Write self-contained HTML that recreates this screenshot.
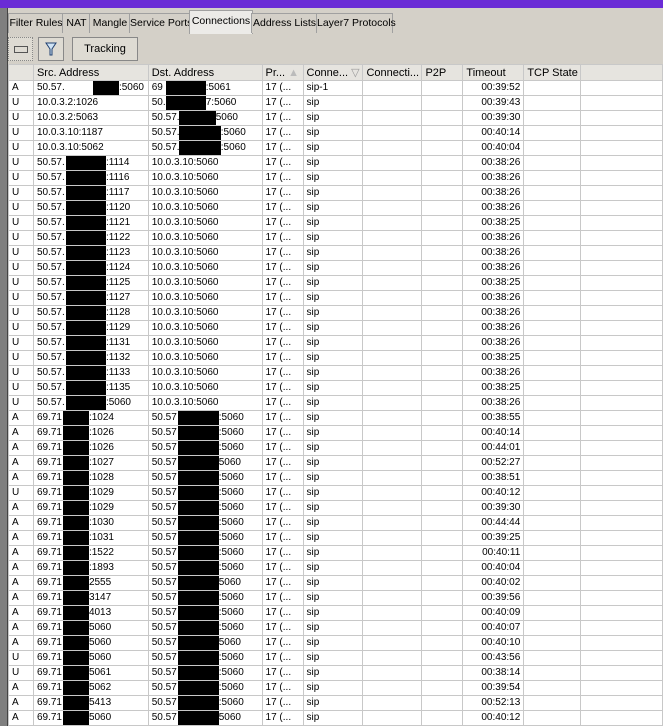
<!DOCTYPE html>
<html><head><meta charset="utf-8"><style>
body{margin:0;width:663px;height:726px;overflow:hidden;background:#d4d0c8;font-family:"Liberation Sans",sans-serif;font-size:10px;position:relative}
.title{position:absolute;left:0;top:0;width:663px;height:8px;background:#6a2bd6}
.lb{position:absolute;left:0;top:8px;width:7px;height:718px;background:#7f7f7f;border-right:1px solid #444}
.tab{position:absolute;top:13px;height:19px;line-height:19px;border:1px solid #a0a0a0;border-bottom:none;text-align:center;font-size:10.5px;background:#d4d0c8;white-space:nowrap;overflow:visible}
.tab.act{top:10px;height:23px;line-height:21px;background:#ecebe8}
.btn{position:absolute;top:37px;height:22px;border:1px solid #888;background:#dedbd3;text-align:center;line-height:22px;font-size:11px}
table{position:absolute;left:8px;top:64px;border-collapse:collapse;table-layout:fixed;background:#fff}
td{height:14px;border:1px solid #c8c8c8;padding:0 0 0 3px;white-space:nowrap;overflow:hidden;position:relative;line-height:14px}
tr.h td{height:15px;background:#e6e4df;font-size:11px}
td.r{text-align:right;padding-right:3px}
.k{position:absolute;top:0;height:15px;background:#000}
b{position:absolute;top:0;font-weight:normal}
</style></head><body>
<div class="title"></div><div class="lb"></div>
<div class="tab" style="left:8px;width:54px">Filter Rules</div>
<div class="tab" style="left:62px;width:27px">NAT</div>
<div class="tab" style="left:89px;width:40px">Mangle</div>
<div class="tab" style="left:129px;width:60px">Service Ports</div>
<div class="tab act" style="left:189px;width:62px">Connections</div>
<div class="tab" style="left:251px;width:65px">Address Lists</div>
<div class="tab" style="left:316px;width:75px">Layer7 Protocols</div>
<div class="btn" style="left:8px;width:23px;border-style:dotted"><span style="display:inline-block;width:12px;height:5px;border:1px solid #555;vertical-align:middle"></span></div>
<div class="btn" style="left:38px;width:24px"><svg width="12" height="16" viewBox="0 0 12 16" style="vertical-align:middle"><path d="M1 2h10L7 8v6H5V8z" fill="#cfe3f5" stroke="#204070"/></svg></div>
<div class="btn" style="left:72px;width:64px">Tracking</div>
<table>
<colgroup><col style="width:25px"><col style="width:115px"><col style="width:114px"><col style="width:41px"><col style="width:60px"><col style="width:59px"><col style="width:41px"><col style="width:61px"><col style="width:57px"><col style="width:82px"></colgroup>
<tr class="h"><td></td><td>Src. Address</td><td>Dst. Address</td><td>Pr... <span style="color:#bbb">▲</span></td><td>Conne... <span style="color:#999">▽</span></td><td>Connecti...</td><td>P2P</td><td>Timeout</td><td>TCP State</td><td></td></tr>
<tr><td>A</td><td>50.57.<i class="k" style="left:59px;width:26px"></i><b style="left:85px">:5060</b></td><td>69<i class="k" style="left:17px;width:40px"></i><b style="left:57px">:5061</b></td><td>17 (...</td><td>sip-1</td><td></td><td></td><td class="r">00:39:52</td><td></td><td></td></tr>
<tr><td>U</td><td>10.0.3.2:1026</td><td>50.<i class="k" style="left:17px;width:40px"></i><b style="left:57px">7:5060</b></td><td>17 (...</td><td>sip</td><td></td><td></td><td class="r">00:39:43</td><td></td><td></td></tr>
<tr><td>U</td><td>10.0.3.2:5063</td><td>50.57.<i class="k" style="left:30px;width:37px"></i><b style="left:67px">5060</b></td><td>17 (...</td><td>sip</td><td></td><td></td><td class="r">00:39:30</td><td></td><td></td></tr>
<tr><td>U</td><td>10.0.3.10:1187</td><td>50.57.<i class="k" style="left:30px;width:42px"></i><b style="left:72px">:5060</b></td><td>17 (...</td><td>sip</td><td></td><td></td><td class="r">00:40:14</td><td></td><td></td></tr>
<tr><td>U</td><td>10.0.3.10:5062</td><td>50.57.<i class="k" style="left:30px;width:42px"></i><b style="left:72px">:5060</b></td><td>17 (...</td><td>sip</td><td></td><td></td><td class="r">00:40:04</td><td></td><td></td></tr>
<tr><td>U</td><td>50.57.<i class="k" style="left:32px;width:40px"></i><b style="left:72px">:1114</b></td><td>10.0.3.10:5060</td><td>17 (...</td><td>sip</td><td></td><td></td><td class="r">00:38:26</td><td></td><td></td></tr>
<tr><td>U</td><td>50.57.<i class="k" style="left:32px;width:40px"></i><b style="left:72px">:1116</b></td><td>10.0.3.10:5060</td><td>17 (...</td><td>sip</td><td></td><td></td><td class="r">00:38:26</td><td></td><td></td></tr>
<tr><td>U</td><td>50.57.<i class="k" style="left:32px;width:40px"></i><b style="left:72px">:1117</b></td><td>10.0.3.10:5060</td><td>17 (...</td><td>sip</td><td></td><td></td><td class="r">00:38:26</td><td></td><td></td></tr>
<tr><td>U</td><td>50.57.<i class="k" style="left:32px;width:40px"></i><b style="left:72px">:1120</b></td><td>10.0.3.10:5060</td><td>17 (...</td><td>sip</td><td></td><td></td><td class="r">00:38:26</td><td></td><td></td></tr>
<tr><td>U</td><td>50.57.<i class="k" style="left:32px;width:40px"></i><b style="left:72px">:1121</b></td><td>10.0.3.10:5060</td><td>17 (...</td><td>sip</td><td></td><td></td><td class="r">00:38:25</td><td></td><td></td></tr>
<tr><td>U</td><td>50.57.<i class="k" style="left:32px;width:40px"></i><b style="left:72px">:1122</b></td><td>10.0.3.10:5060</td><td>17 (...</td><td>sip</td><td></td><td></td><td class="r">00:38:26</td><td></td><td></td></tr>
<tr><td>U</td><td>50.57.<i class="k" style="left:32px;width:40px"></i><b style="left:72px">:1123</b></td><td>10.0.3.10:5060</td><td>17 (...</td><td>sip</td><td></td><td></td><td class="r">00:38:26</td><td></td><td></td></tr>
<tr><td>U</td><td>50.57.<i class="k" style="left:32px;width:40px"></i><b style="left:72px">:1124</b></td><td>10.0.3.10:5060</td><td>17 (...</td><td>sip</td><td></td><td></td><td class="r">00:38:26</td><td></td><td></td></tr>
<tr><td>U</td><td>50.57.<i class="k" style="left:32px;width:40px"></i><b style="left:72px">:1125</b></td><td>10.0.3.10:5060</td><td>17 (...</td><td>sip</td><td></td><td></td><td class="r">00:38:25</td><td></td><td></td></tr>
<tr><td>U</td><td>50.57.<i class="k" style="left:32px;width:40px"></i><b style="left:72px">:1127</b></td><td>10.0.3.10:5060</td><td>17 (...</td><td>sip</td><td></td><td></td><td class="r">00:38:26</td><td></td><td></td></tr>
<tr><td>U</td><td>50.57.<i class="k" style="left:32px;width:40px"></i><b style="left:72px">:1128</b></td><td>10.0.3.10:5060</td><td>17 (...</td><td>sip</td><td></td><td></td><td class="r">00:38:26</td><td></td><td></td></tr>
<tr><td>U</td><td>50.57.<i class="k" style="left:32px;width:40px"></i><b style="left:72px">:1129</b></td><td>10.0.3.10:5060</td><td>17 (...</td><td>sip</td><td></td><td></td><td class="r">00:38:26</td><td></td><td></td></tr>
<tr><td>U</td><td>50.57.<i class="k" style="left:32px;width:40px"></i><b style="left:72px">:1131</b></td><td>10.0.3.10:5060</td><td>17 (...</td><td>sip</td><td></td><td></td><td class="r">00:38:26</td><td></td><td></td></tr>
<tr><td>U</td><td>50.57.<i class="k" style="left:32px;width:40px"></i><b style="left:72px">:1132</b></td><td>10.0.3.10:5060</td><td>17 (...</td><td>sip</td><td></td><td></td><td class="r">00:38:25</td><td></td><td></td></tr>
<tr><td>U</td><td>50.57.<i class="k" style="left:32px;width:40px"></i><b style="left:72px">:1133</b></td><td>10.0.3.10:5060</td><td>17 (...</td><td>sip</td><td></td><td></td><td class="r">00:38:26</td><td></td><td></td></tr>
<tr><td>U</td><td>50.57.<i class="k" style="left:32px;width:40px"></i><b style="left:72px">:1135</b></td><td>10.0.3.10:5060</td><td>17 (...</td><td>sip</td><td></td><td></td><td class="r">00:38:25</td><td></td><td></td></tr>
<tr><td>U</td><td>50.57.<i class="k" style="left:32px;width:40px"></i><b style="left:72px">:5060</b></td><td>10.0.3.10:5060</td><td>17 (...</td><td>sip</td><td></td><td></td><td class="r">00:38:26</td><td></td><td></td></tr>
<tr><td>A</td><td>69.71<i class="k" style="left:29px;width:26px"></i><b style="left:55px">:1024</b></td><td>50.57<i class="k" style="left:29px;width:41px"></i><b style="left:70px">:5060</b></td><td>17 (...</td><td>sip</td><td></td><td></td><td class="r">00:38:55</td><td></td><td></td></tr>
<tr><td>A</td><td>69.71<i class="k" style="left:29px;width:26px"></i><b style="left:55px">:1026</b></td><td>50.57<i class="k" style="left:29px;width:41px"></i><b style="left:70px">:5060</b></td><td>17 (...</td><td>sip</td><td></td><td></td><td class="r">00:40:14</td><td></td><td></td></tr>
<tr><td>A</td><td>69.71<i class="k" style="left:29px;width:26px"></i><b style="left:55px">:1026</b></td><td>50.57<i class="k" style="left:29px;width:41px"></i><b style="left:70px">:5060</b></td><td>17 (...</td><td>sip</td><td></td><td></td><td class="r">00:44:01</td><td></td><td></td></tr>
<tr><td>A</td><td>69.71<i class="k" style="left:29px;width:26px"></i><b style="left:55px">:1027</b></td><td>50.57<i class="k" style="left:29px;width:41px"></i><b style="left:70px">5060</b></td><td>17 (...</td><td>sip</td><td></td><td></td><td class="r">00:52:27</td><td></td><td></td></tr>
<tr><td>A</td><td>69.71<i class="k" style="left:29px;width:26px"></i><b style="left:55px">:1028</b></td><td>50.57<i class="k" style="left:29px;width:41px"></i><b style="left:70px">:5060</b></td><td>17 (...</td><td>sip</td><td></td><td></td><td class="r">00:38:51</td><td></td><td></td></tr>
<tr><td>U</td><td>69.71<i class="k" style="left:29px;width:26px"></i><b style="left:55px">:1029</b></td><td>50.57<i class="k" style="left:29px;width:41px"></i><b style="left:70px">:5060</b></td><td>17 (...</td><td>sip</td><td></td><td></td><td class="r">00:40:12</td><td></td><td></td></tr>
<tr><td>A</td><td>69.71<i class="k" style="left:29px;width:26px"></i><b style="left:55px">:1029</b></td><td>50.57<i class="k" style="left:29px;width:41px"></i><b style="left:70px">:5060</b></td><td>17 (...</td><td>sip</td><td></td><td></td><td class="r">00:39:30</td><td></td><td></td></tr>
<tr><td>A</td><td>69.71<i class="k" style="left:29px;width:26px"></i><b style="left:55px">:1030</b></td><td>50.57<i class="k" style="left:29px;width:41px"></i><b style="left:70px">:5060</b></td><td>17 (...</td><td>sip</td><td></td><td></td><td class="r">00:44:44</td><td></td><td></td></tr>
<tr><td>A</td><td>69.71<i class="k" style="left:29px;width:26px"></i><b style="left:55px">:1031</b></td><td>50.57<i class="k" style="left:29px;width:41px"></i><b style="left:70px">:5060</b></td><td>17 (...</td><td>sip</td><td></td><td></td><td class="r">00:39:25</td><td></td><td></td></tr>
<tr><td>A</td><td>69.71<i class="k" style="left:29px;width:26px"></i><b style="left:55px">:1522</b></td><td>50.57<i class="k" style="left:29px;width:41px"></i><b style="left:70px">:5060</b></td><td>17 (...</td><td>sip</td><td></td><td></td><td class="r">00:40:11</td><td></td><td></td></tr>
<tr><td>A</td><td>69.71<i class="k" style="left:29px;width:26px"></i><b style="left:55px">:1893</b></td><td>50.57<i class="k" style="left:29px;width:41px"></i><b style="left:70px">:5060</b></td><td>17 (...</td><td>sip</td><td></td><td></td><td class="r">00:40:04</td><td></td><td></td></tr>
<tr><td>A</td><td>69.71<i class="k" style="left:29px;width:26px"></i><b style="left:55px">2555</b></td><td>50.57<i class="k" style="left:29px;width:41px"></i><b style="left:70px">5060</b></td><td>17 (...</td><td>sip</td><td></td><td></td><td class="r">00:40:02</td><td></td><td></td></tr>
<tr><td>A</td><td>69.71<i class="k" style="left:29px;width:26px"></i><b style="left:55px">3147</b></td><td>50.57<i class="k" style="left:29px;width:41px"></i><b style="left:70px">:5060</b></td><td>17 (...</td><td>sip</td><td></td><td></td><td class="r">00:39:56</td><td></td><td></td></tr>
<tr><td>A</td><td>69.71<i class="k" style="left:29px;width:26px"></i><b style="left:55px">4013</b></td><td>50.57<i class="k" style="left:29px;width:41px"></i><b style="left:70px">:5060</b></td><td>17 (...</td><td>sip</td><td></td><td></td><td class="r">00:40:09</td><td></td><td></td></tr>
<tr><td>A</td><td>69.71<i class="k" style="left:29px;width:26px"></i><b style="left:55px">5060</b></td><td>50.57<i class="k" style="left:29px;width:41px"></i><b style="left:70px">:5060</b></td><td>17 (...</td><td>sip</td><td></td><td></td><td class="r">00:40:07</td><td></td><td></td></tr>
<tr><td>A</td><td>69.71<i class="k" style="left:29px;width:26px"></i><b style="left:55px">5060</b></td><td>50.57<i class="k" style="left:29px;width:41px"></i><b style="left:70px">5060</b></td><td>17 (...</td><td>sip</td><td></td><td></td><td class="r">00:40:10</td><td></td><td></td></tr>
<tr><td>U</td><td>69.71<i class="k" style="left:29px;width:26px"></i><b style="left:55px">5060</b></td><td>50.57<i class="k" style="left:29px;width:41px"></i><b style="left:70px">:5060</b></td><td>17 (...</td><td>sip</td><td></td><td></td><td class="r">00:43:56</td><td></td><td></td></tr>
<tr><td>U</td><td>69.71<i class="k" style="left:29px;width:26px"></i><b style="left:55px">5061</b></td><td>50.57<i class="k" style="left:29px;width:41px"></i><b style="left:70px">:5060</b></td><td>17 (...</td><td>sip</td><td></td><td></td><td class="r">00:38:14</td><td></td><td></td></tr>
<tr><td>A</td><td>69.71<i class="k" style="left:29px;width:26px"></i><b style="left:55px">5062</b></td><td>50.57<i class="k" style="left:29px;width:41px"></i><b style="left:70px">:5060</b></td><td>17 (...</td><td>sip</td><td></td><td></td><td class="r">00:39:54</td><td></td><td></td></tr>
<tr><td>A</td><td>69.71<i class="k" style="left:29px;width:26px"></i><b style="left:55px">5413</b></td><td>50.57<i class="k" style="left:29px;width:41px"></i><b style="left:70px">:5060</b></td><td>17 (...</td><td>sip</td><td></td><td></td><td class="r">00:52:13</td><td></td><td></td></tr>
<tr><td>A</td><td>69.71<i class="k" style="left:29px;width:26px"></i><b style="left:55px">5060</b></td><td>50.57<i class="k" style="left:29px;width:41px"></i><b style="left:70px">5060</b></td><td>17 (...</td><td>sip</td><td></td><td></td><td class="r">00:40:12</td><td></td><td></td></tr>
</table>
</body></html>
